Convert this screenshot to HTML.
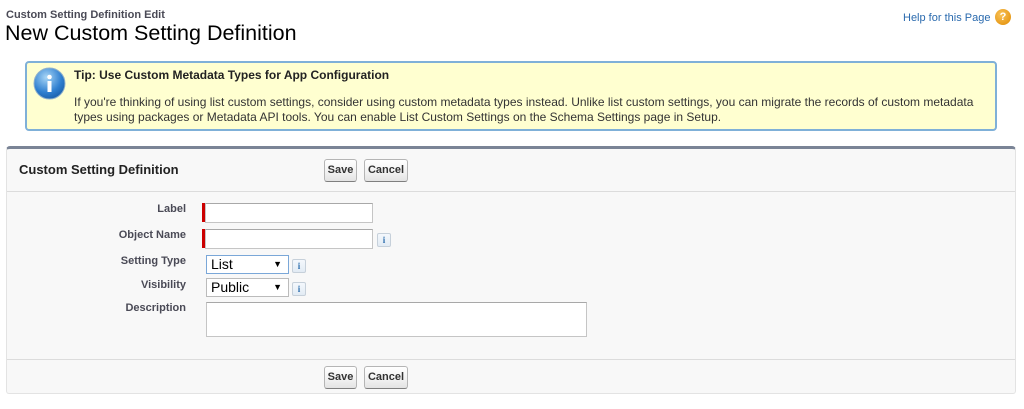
<!DOCTYPE html>
<html><head><style>
*{box-sizing:border-box;margin:0;padding:0}
body{width:1024px;height:409px;background:#fff;font-family:"Liberation Sans",Arial,sans-serif;position:relative;overflow:hidden;color:#222}
.abs{position:absolute}
.btn{position:absolute;height:23px;border:1px solid #b5b5b5;border-bottom-color:#7f7f7f;border-radius:3px;background:linear-gradient(#fff,#f1f1f1 60%,#e3e3e3);font-weight:bold;font-size:11px;color:#333;text-align:center;line-height:21px}
.lbl{position:absolute;right:838px;font-size:11px;font-weight:bold;color:#4a4a56;text-align:right}
.inp{position:absolute;background:#fff;border:1px solid #c5c5c5;border-top-color:#a8a8a8}
.req{position:absolute;width:3px;background:#c00;}
.info{position:absolute;width:14px;height:14px;border:1px solid #c6d0da;border-radius:2px;background:linear-gradient(#f4f8fc,#e2ebf4);color:#2f6fae;font:bold 9px "Liberation Serif",serif;text-align:center;line-height:12px}
.sel{position:absolute;background:#fff;border:1px solid #bbb;font-size:14px;color:#000;padding-left:4px;line-height:17px}
.sel span{position:absolute;right:6px;top:0;font-size:9px}
</style></head><body>
<div class="abs" style="left:6px;top:9px;font-size:11px;font-weight:bold;color:#4a4a56">Custom Setting Definition Edit</div>
<div class="abs" style="left:5px;top:21px;font-size:21.5px;color:#000">New Custom Setting Definition</div>
<div class="abs" style="left:903px;top:12px;font-size:11px;color:#2a6aae">Help for this Page</div>
<div class="abs" style="left:995px;top:9px;width:16px;height:16px;border-radius:50%;background:radial-gradient(circle at 40% 35%,#f9c35a,#e08a00);color:#fff;font-size:11px;font-weight:bold;text-align:center;line-height:16px">?</div>

<div class="abs" style="left:25px;top:61px;width:972px;height:70px;background:#ffffd0;border:2px solid #7fb0d8;border-radius:4px"></div>
<svg class="abs" style="left:33px;top:67px" width="33" height="33" viewBox="0 0 33 33">
<defs><radialGradient id="g" cx="0.4" cy="0.3" r="0.7"><stop offset="0" stop-color="#a8d6f6"/><stop offset="0.7" stop-color="#2f7fd0"/><stop offset="1" stop-color="#1e64b0"/></radialGradient></defs>
<circle cx="16.5" cy="16.5" r="15.5" fill="url(#g)" stroke="#8fb0cc"/>
<circle cx="16.5" cy="10" r="2.3" fill="#fff"/>
<rect x="14.5" y="14" width="4" height="11" fill="#fff"/>
</svg>
<div class="abs" style="left:74px;top:68px;font-size:12px;font-weight:bold;color:#222">Tip: Use Custom Metadata Types for App Configuration</div>
<div class="abs" style="left:74px;top:95px;width:915px;font-size:12px;line-height:15px;color:#333">If you're thinking of using list custom settings, consider using custom metadata types instead. Unlike list custom settings, you can migrate the records of custom metadata types using packages or Metadata API tools. You can enable List Custom Settings on the Schema Settings page in Setup.</div>

<div class="abs" style="left:6px;top:146px;width:1010px;height:248px;background:#f8f8f8;border:1px solid #e3e3e3;border-top:3px solid #7a8496;border-radius:4px 4px 3px 3px"></div>
<div class="abs" style="left:7px;top:191px;width:1008px;height:1px;background:#dcdcdc"></div>
<div class="abs" style="left:7px;top:359px;width:1008px;height:1px;background:#dcdcdc"></div>
<div class="abs" style="left:19px;top:162px;font-size:13px;font-weight:bold;color:#222">Custom Setting Definition</div>
<div class="btn" style="left:324px;top:159px;width:33px">Save</div>
<div class="btn" style="left:364px;top:159px;width:44px">Cancel</div>
<div class="btn" style="left:324px;top:366px;width:33px">Save</div>
<div class="btn" style="left:364px;top:366px;width:44px">Cancel</div>

<div class="lbl" style="top:203px">Label</div>
<div class="lbl" style="top:229px">Object Name</div>
<div class="lbl" style="top:255px">Setting Type</div>
<div class="lbl" style="top:279px">Visibility</div>
<div class="lbl" style="top:302px">Description</div>

<div class="req" style="left:202px;top:203px;height:19px"></div>
<div class="inp" style="left:205px;top:203px;width:168px;height:20px"></div>
<div class="req" style="left:202px;top:229px;height:19px"></div>
<div class="inp" style="left:205px;top:229px;width:168px;height:20px"></div>
<div class="info" style="left:377px;top:233px">i</div>
<div class="sel" style="left:206px;top:255px;width:83px;height:19px;border-color:#7aa7d8">List<span>▼</span></div>
<div class="info" style="left:292px;top:259px">i</div>
<div class="sel" style="left:206px;top:278px;width:83px;height:19px">Public<span>▼</span></div>
<div class="info" style="left:292px;top:282px">i</div>
<div class="inp" style="left:206px;top:302px;width:381px;height:35px"></div>
</body></html>
